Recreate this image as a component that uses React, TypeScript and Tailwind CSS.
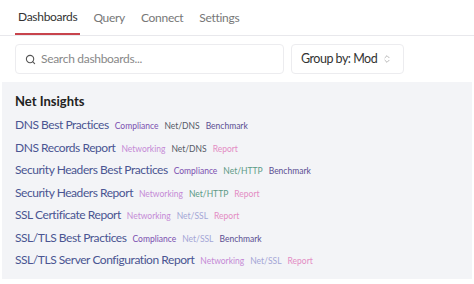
import { Search, ChevronsUpDown } from 'lucide-react';

type Tag = { label: string; color: string };

const rows: { title: string; tags: Tag[] }[] = [
  {
    title: 'DNS Best Practices',
    tags: [
      { label: 'Compliance', color: 'text-[#7a4fb0]' },
      { label: 'Net/DNS', color: 'text-[#555a66]' },
      { label: 'Benchmark', color: 'text-[#5a4e92]' },
    ],
  },
  {
    title: 'DNS Records Report',
    tags: [
      { label: 'Networking', color: 'text-[#c58ad6]' },
      { label: 'Net/DNS', color: 'text-[#555a66]' },
      { label: 'Report', color: 'text-[#e38cc4]' },
    ],
  },
  {
    title: 'Security Headers Best Practices',
    tags: [
      { label: 'Compliance', color: 'text-[#7a4fb0]' },
      { label: 'Net/HTTP', color: 'text-[#5c9a86]' },
      { label: 'Benchmark', color: 'text-[#5a4e92]' },
    ],
  },
  {
    title: 'Security Headers Report',
    tags: [
      { label: 'Networking', color: 'text-[#c58ad6]' },
      { label: 'Net/HTTP', color: 'text-[#5c9a86]' },
      { label: 'Report', color: 'text-[#e38cc4]' },
    ],
  },
  {
    title: 'SSL Certificate Report',
    tags: [
      { label: 'Networking', color: 'text-[#c58ad6]' },
      { label: 'Net/SSL', color: 'text-[#a3a6d6]' },
      { label: 'Report', color: 'text-[#e38cc4]' },
    ],
  },
  {
    title: 'SSL/TLS Best Practices',
    tags: [
      { label: 'Compliance', color: 'text-[#7a4fb0]' },
      { label: 'Net/SSL', color: 'text-[#a3a6d6]' },
      { label: 'Benchmark', color: 'text-[#5a4e92]' },
    ],
  },
  {
    title: 'SSL/TLS Server Configuration Report',
    tags: [
      { label: 'Networking', color: 'text-[#c58ad6]' },
      { label: 'Net/SSL', color: 'text-[#a3a6d6]' },
      { label: 'Report', color: 'text-[#e38cc4]' },
    ],
  },
];

export default function App() {
  return (
    <div className="w-[474px] h-[284px] bg-white overflow-hidden font-['Lato',sans-serif]">
      {/* Tabs */}
      <nav className="flex gap-[10px] px-[15px] h-[36px] border-b border-[#e8e8ec] text-[12px] tracking-[-0.3px]">
        <div className="flex items-center px-[3px] border-b-2 border-[#c8444c] text-[#333]">Dashboards</div>
        <div className="flex items-center px-[3px] text-[#777]">Query</div>
        <div className="flex items-center px-[3px] text-[#777]">Connect</div>
        <div className="flex items-center px-[3px] text-[#777]">Settings</div>
      </nav>

      {/* Search + group */}
      <div className="flex gap-[7px] px-[15px] pt-[8px]">
        <div className="w-[269px] h-[30px] flex items-center gap-[5px] px-[9px] border border-[#ececef] rounded-[4px]">
          <Search size={11} strokeWidth={2.4} className="text-[#555]" />
          <span className="text-[12px] tracking-[-0.3px] text-[#888]">Search dashboards...</span>
        </div>
        <div className="w-[113px] h-[30px] flex items-center justify-between pl-[9px] pr-[11px] border border-[#ececef] rounded-[4px]">
          <span className="text-[12.5px] tracking-[-0.5px] text-[#333] whitespace-nowrap">Group by: Mod</span>
          <ChevronsUpDown size={10} className="text-[#aaa]" />
        </div>
      </div>

      {/* Panel */}
      <div className="mx-[2px] mt-[8px] h-[197px] bg-[#f3f4f7] px-[13px] pt-[9px]">
        <div className="text-[13px] font-bold text-[#222] leading-[20px] mb-[5px]">Net Insights</div>
        <div className="flex flex-col">
          {rows.map((r) => (
            <div key={r.title} className="flex items-baseline gap-[6px] h-[22.5px] whitespace-nowrap">
              <span className="text-[12px] tracking-[-0.45px] text-[#4a5592]">{r.title}</span>
              {r.tags.map((t) => (
                <span key={t.label} className={`text-[8.5px] ${t.color}`}>
                  {t.label}
                </span>
              ))}
            </div>
          ))}
        </div>
      </div>
    </div>
  );
}
